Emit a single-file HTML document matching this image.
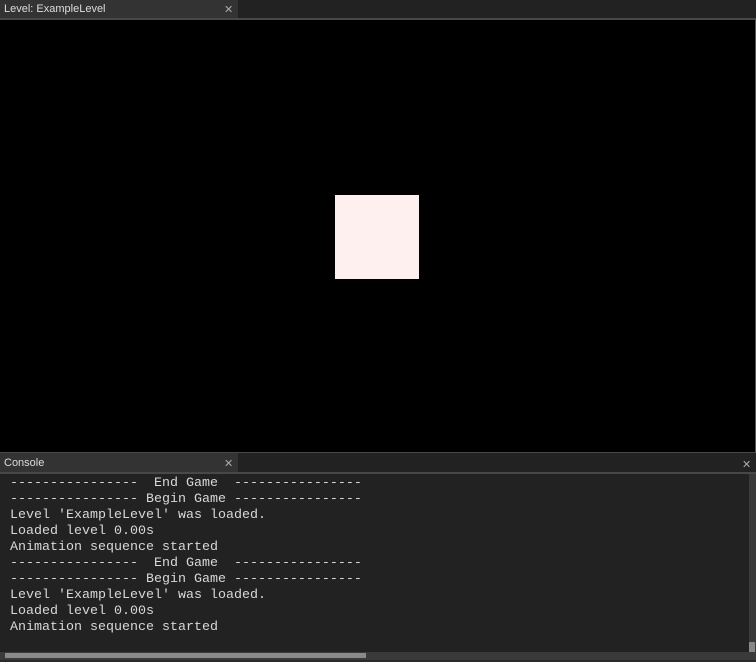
<!DOCTYPE html>
<html><head><style>
*{margin:0;padding:0;box-sizing:border-box}
body{width:756px;height:662px;background:#222;position:relative;overflow:hidden;font-family:"Liberation Sans","DejaVu Sans",sans-serif}
.bar{position:absolute;left:0;width:756px;height:18px;background:#222}
.tab{position:absolute;left:0;top:0;width:238px;height:18px;background:#333;color:#ddd;font-size:11px;line-height:18px;padding-left:4px}
.x{position:absolute;color:#aaa;font-size:11px;line-height:18px;font-weight:300}
.line{position:absolute;left:0;width:756px;height:2px;background:#484848}
pre{position:absolute;left:10px;top:476px;font-family:"Liberation Mono","DejaVu Sans Mono",monospace;font-size:13.33px;line-height:16px;color:#d8d8d8}
</style></head><body>
<div class="bar" style="top:0"><div class="tab" style="line-height:19px">Level: ExampleLevel</div><div class="x" style="left:224px;top:1px">✕</div></div>
<div class="line" style="top:18px"></div>
<div style="position:absolute;left:0;top:20px;width:755px;height:432px;background:#000"></div>
<div style="position:absolute;left:755px;top:20px;width:1px;height:432px;background:#555"></div>
<div style="position:absolute;left:335px;top:195px;width:84px;height:84px;background:#fff0f0"></div>
<div class="line" style="top:452px;height:1px"></div>
<div class="bar" style="top:453px;height:19px"><div class="tab" style="height:19px;line-height:21px">Console</div><div class="x" style="left:224px;top:2px">✕</div><div class="x" style="left:742px;top:3px">✕</div></div>
<div class="line" style="top:472px"></div>
<pre>----------------  End Game  ----------------
---------------- Begin Game ----------------
Level 'ExampleLevel' was loaded.
Loaded level 0.00s
Animation sequence started
----------------  End Game  ----------------
---------------- Begin Game ----------------
Level 'ExampleLevel' was loaded.
Loaded level 0.00s
Animation sequence started</pre>
<div style="position:absolute;left:749px;top:474px;width:7px;height:178px;background:#3a3a3a"></div>
<div style="position:absolute;left:749px;top:642px;width:6px;height:10px;background:#888"></div>
<div style="position:absolute;left:0;top:652px;width:756px;height:10px;background:#3a3a3a"></div>
<div style="position:absolute;left:5px;top:653px;width:361px;height:5px;background:#8a8a8a"></div>
<div style="position:absolute;left:0;top:660px;width:756px;height:2px;background:#2a2a2a"></div>
</body></html>
